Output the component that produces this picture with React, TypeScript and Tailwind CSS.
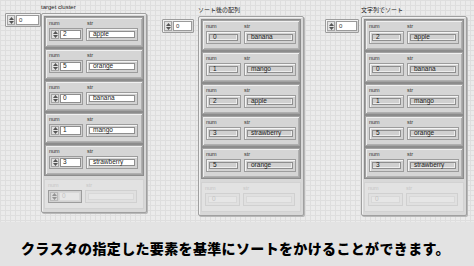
import type { ReactNode } from "react";

type Row = { num: number; str: string };

const original: Row[] = [
  { num: 2, str: "apple" },
  { num: 5, str: "orange" },
  { num: 0, str: "banana" },
  { num: 1, str: "mango" },
  { num: 3, str: "strawberry" },
];

const sortedByNum: Row[] = [
  { num: 0, str: "banana" },
  { num: 1, str: "mango" },
  { num: 2, str: "apple" },
  { num: 3, str: "strawberry" },
  { num: 5, str: "orange" },
];

const sortedByStr: Row[] = [
  { num: 2, str: "apple" },
  { num: 0, str: "banana" },
  { num: 1, str: "mango" },
  { num: 5, str: "orange" },
  { num: 3, str: "strawberry" },
];

const sans = "font-['Liberation_Sans','Noto_Sans_CJK_JP',sans-serif]";

/* ----------------------------- spin arrows ----------------------------- */

function Spin({ faded }: { faded?: boolean }) {
  return (
    <div
      className={`flex w-[8px] flex-col items-center justify-center gap-[1px] border border-[#a4a4a4] bg-[#e2e2e2] ${
        faded ? "opacity-50" : ""
      }`}
    >
      <svg width="5" height="3" viewBox="0 0 5 3">
        <path d="M0 3 L2.5 0 L5 3 Z" fill="#555" />
      </svg>
      <svg width="5" height="3" viewBox="0 0 5 3">
        <path d="M0 0 L2.5 3 L5 0 Z" fill="#555" />
      </svg>
    </div>
  );
}

/* ------------------------------ index box ------------------------------ */

function IndexBox({ className }: { className: string }) {
  return (
    <div
      className={`flex h-[14px] gap-[1px] rounded-[1px] border border-[#9c9c9c] bg-[#d6d6d6] p-[1px] shadow-[inset_1px_1px_0_#f2f2f2] ${className}`}
    >
      <Spin />
      <div className="flex flex-1 items-center border border-[#9a9a9a] bg-white pl-[2px] text-[6px] leading-none text-[#333]">
        0
      </div>
    </div>
  );
}

/* ------------------------------- fields ------------------------------- */

function Field({
  children,
  control,
  faded,
  className,
}: {
  children?: ReactNode;
  control: boolean;
  faded?: boolean;
  className: string;
}) {
  return (
    <div
      className={`flex h-[13px] border p-[2px] ${className} ${
        faded
          ? "border-[#d0d0d0] bg-[#e0e0e0]"
          : "border-[#9c9c9c] bg-[#d2d2d2] shadow-[inset_1px_1px_0_#f4f4f4]"
      }`}
    >
      <div
        className={`flex flex-1 items-center border pl-[3px] text-[6.5px] leading-none ${
          faded
            ? "border-[#d8d8d8] bg-[#e6e6e6] text-[#c4c4c4]"
            : control
              ? "border-[#8e8e8e] bg-white text-[#222]"
              : "border-[#8e8e8e] bg-[#d0d0d0] text-[#222] shadow-[inset_-1px_-1px_0_#ededed]"
        }`}
      >
        {children}
      </div>
    </div>
  );
}

/* ---------------------------- cluster cell ---------------------------- */

function Cluster({
  row,
  control,
  faded,
}: {
  row?: Row;
  control: boolean;
  faded?: boolean;
}) {
  return (
    <div
      className={`flex h-[30px] flex-col px-[3px] pt-[2px] ${
        faded
          ? "border border-[#d2d2d2] bg-[#e2e2e2]"
          : "border border-[#a2a2a2] bg-[#d5d5d5] shadow-[inset_1px_1px_0_#f0f0f0,inset_-1px_-1px_0_#b0b0b0]"
      }`}
    >
      <div
        className={`flex h-[8px] items-center text-[5.5px] leading-none ${
          faded ? "text-[#c6c6c6]" : "text-[#333]"
        }`}
      >
        <span className="w-[38px]">num</span>
        <span>str</span>
      </div>
      <div className="flex gap-[3px]">
        {control ? (
          <div className="flex h-[13px] w-[34px] gap-[1px] border border-[#9c9c9c] bg-[#d2d2d2] p-[1px]">
            <Spin faded={faded} />
            <div
              className={`flex flex-1 items-center border pl-[2px] text-[6.5px] leading-none ${
                faded
                  ? "border-[#d8d8d8] bg-[#e6e6e6] text-[#c4c4c4]"
                  : "border-[#8e8e8e] bg-white text-[#222]"
              }`}
            >
              {row ? row.num : 0}
            </div>
          </div>
        ) : (
          <Field control={false} faded={faded} className="w-[35px]">
            {row ? row.num : 0}
          </Field>
        )}
        <Field control={control} faded={faded} className="w-[52px]">
          {row?.str}
        </Field>
      </div>
    </div>
  );
}

/* ------------------------------ array ------------------------------ */

function ArrayPanel({
  label,
  rows,
  control,
  className,
}: {
  label: string;
  rows: Row[];
  control: boolean;
  className: string;
}) {
  return (
    <div className={`flex flex-col ${className}`}>
      <div className="flex h-[13px] items-center text-[6px] leading-none text-[#222]">
        {label}
      </div>
      <div className="flex w-[106px] flex-col rounded-[2px] border border-[#a0a0a0] bg-[#d8d8d8] p-[2px] shadow-[inset_1px_1px_0_#f2f2f2,1px_1px_0_#b8b8b8]">
        <div className="flex flex-col gap-[2px] bg-[#8c8c8c] p-[1px]">
          {rows.map((r, i) => (
            <Cluster key={i} row={r} control={control} />
          ))}
        </div>
        <div className="mt-[3px] mb-[1px]">
          <Cluster control={control} faded />
        </div>
      </div>
    </div>
  );
}

export default function App() {
  return (
    <div className={`flex h-[266px] w-[474px] flex-col overflow-hidden ${sans}`}>
      <div className="flex h-[222px] items-start bg-[#ebebeb] bg-[linear-gradient(#dedede_1px,transparent_1px),linear-gradient(90deg,#dedede_1px,transparent_1px)] bg-[size:5px_5px]">
        <IndexBox className="mt-[13px] ml-[5px] w-[36px]" />
        <ArrayPanel label="target cluster" rows={original} control className="" />

        <IndexBox className="mt-[19px] ml-[15px] w-[32px]" />
        <ArrayPanel label="ソート後の配列" rows={sortedByNum} control={false} className="mt-[3px] ml-[4px]" />

        <IndexBox className="mt-[19px] ml-[21px] w-[34px]" />
        <ArrayPanel label="文字列でソート" rows={sortedByStr} control={false} className="mt-[3px] ml-[2px]" />
      </div>
      <div className="flex h-[44px] items-start bg-[#e3e3e3] pt-[18px] pl-[21px]">
        <p className="font-['Noto_Sans_CJK_JP',sans-serif] text-[14px] leading-[16px] font-black tracking-[0.35px] text-black">
          クラスタの指定した要素を基準にソートをかけることができます。
        </p>
      </div>
    </div>
  );
}
